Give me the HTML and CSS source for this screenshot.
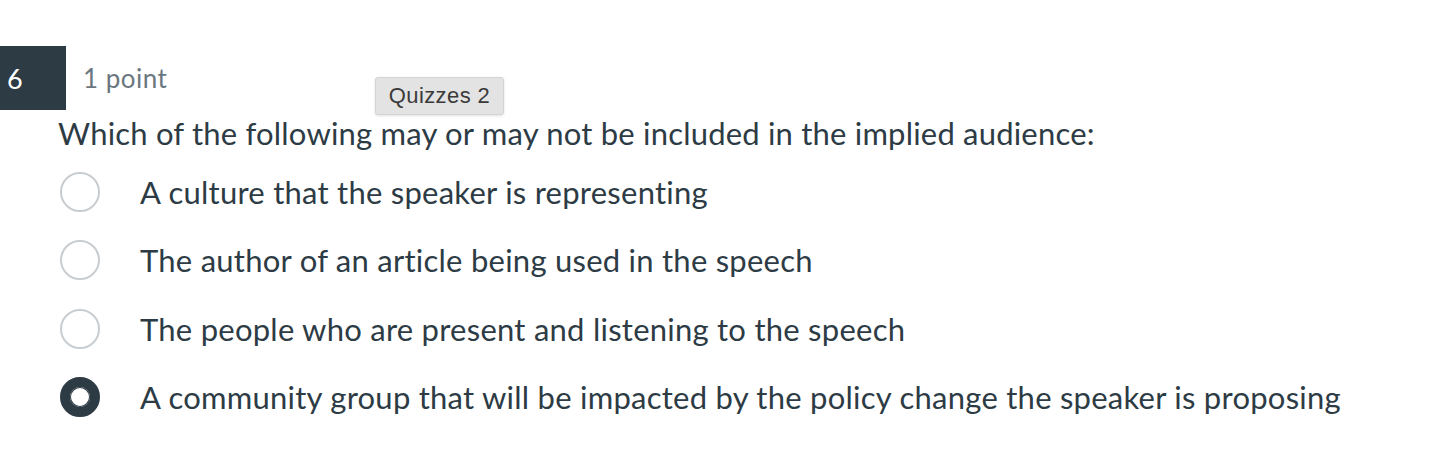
FILE: index.html
```html
<!DOCTYPE html>
<html lang="en">
<head>
<meta charset="utf-8">
<link rel="stylesheet" href="styles.css">
</head>
<body>
<div class="question">
  <div class="header">
    <div class="number">6</div>
    <div class="points">1 point</div>
    <div class="tooltip">Quizzes 2</div>
  </div>
  <div class="prompt">Which of the following may or may not be included in the implied audience:</div>
  <ul class="options">
    <li class="option"><span class="radio"></span><span class="label">A culture that the speaker is representing</span></li>
    <li class="option"><span class="radio"></span><span class="label">The author of an article being used in the speech</span></li>
    <li class="option"><span class="radio"></span><span class="label">The people who are present and listening to the speech</span></li>
    <li class="option"><span class="radio checked"></span><span class="label">A community group that will be impacted by the policy change the speaker is proposing</span></li>
  </ul>
</div>
</body>
</html>
```
FILE: styles.css
```css
html, body {
  margin: 0;
  padding: 0;
  background: #ffffff;
}
body {
  font-family: Lato, "Noto Sans", sans-serif;
  color: #2D3B45;
}
.question {
  padding-top: 46px;
}
.header {
  position: relative;
  display: flex;
  align-items: center;
  height: 64px;
}
.number {
  width: 66px;
  height: 64px;
  background: #2D3B45;
  color: #ffffff;
  font-size: 27px;
  display: flex;
  align-items: center;
  padding-left: 7px;
  box-sizing: border-box;
}
.points {
  margin-left: 17px;
  font-size: 26px;
  letter-spacing: 0.5px;
  color: #6B7780;
}
.tooltip {
  position: absolute;
  left: 375px;
  top: 31px;
  width: 129px;
  height: 38px;
  box-sizing: border-box;
  background: #E3E3E3;
  border: 1px solid #D4D4D4;
  border-radius: 3px;
  box-shadow: 0 1px 3px rgba(0,0,0,0.12);
  font-family: "Liberation Sans", Arial, sans-serif;
  font-size: 22px;
  letter-spacing: 0.4px;
  color: #3A3A3A;
  display: flex;
  align-items: center;
  justify-content: center;
}
.prompt {
  margin-left: 58px;
  font-size: 31px;
  letter-spacing: 0.2px;
  line-height: 46px;
  margin-bottom: 2px;
  color: #2D3B45;
}
.options {
  list-style: none;
  margin: 0;
  padding: 0 0 0 60px;
}
.option {
  display: flex;
  align-items: center;
  height: 68.3px;
}
.radio {
  width: 40px;
  height: 40px;
  box-sizing: border-box;
  border-radius: 50%;
  border: 2px solid #C7CDD1;
  background: #ffffff;
  flex: none;
}
.radio.checked {
  border: 10px solid #2D3B45;
  box-shadow: inset 0 0 0 1px #2D3B45;
}
.label {
  margin-left: 40px;
  font-size: 31px;
  letter-spacing: 0.25px;
}
```
